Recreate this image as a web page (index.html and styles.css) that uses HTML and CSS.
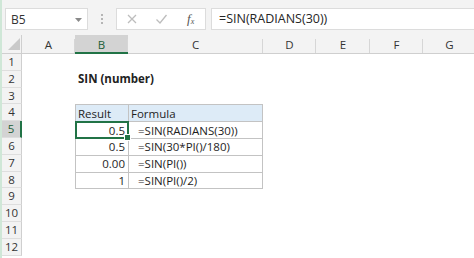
FILE: index.html
```html
<!DOCTYPE html>
<html>
<head>
<meta charset="utf-8">
<link rel="stylesheet" href="styles.css">
</head>
<body>
<div class="app">
  <div class="fbar">
    <div class="namebox"><span class="nb-text">B5</span><svg class="nb-arrow" width="7" height="4" viewBox="0 0 7 4"><path d="M0 0h7L3.5 4z" fill="#8a8a8a"/></svg></div>
    <div class="dots"><i></i><i></i><i></i></div>
    <div class="fx-group">
      <svg class="ic" width="12" height="12" viewBox="0 0 12 12"><path d="M2 2l8 8M10 2l-8 8" stroke="#bdbdbd" stroke-width="1.3" fill="none"/></svg>
      <svg class="ic" width="13" height="12" viewBox="0 0 13 12"><path d="M1.5 6.5l3.5 3.5L11.5 2" stroke="#bdbdbd" stroke-width="1.3" fill="none"/></svg>
      <span class="fx">f<sub>x</sub></span>
    </div>
    <div class="finput">=SIN(RADIANS(30))</div>
  </div>
  <div class="sheet">
    <div class="corner"><svg width="12" height="12" viewBox="0 0 12 12"><path d="M12 0V12H0z" fill="#c9c9c9"/></svg></div>
    <div class="ch">A</div>
    <div class="ch sel">B</div>
    <div class="ch">C</div>
    <div class="ch">D</div>
    <div class="ch">E</div>
    <div class="ch">F</div>
    <div class="ch">G</div>
    <div class="ch last"></div>

    <div class="rh r1">1</div>
    <div class="rh r2">2</div>
    <div class="rh r3">3</div>
    <div class="rh r4">4</div>
    <div class="rh r5 sel">5</div>
    <div class="rh r6">6</div>
    <div class="rh r7">7</div>
    <div class="rh r8">8</div>
    <div class="rh r9">9</div>
    <div class="rh r10">10</div>
    <div class="rh r11">11</div>
    <div class="rh r12">12</div>

    <div class="title">SIN (number)</div>

    <table class="tbl">
      <tr class="thead"><td>Result</td><td>Formula</td></tr>
      <tr><td class="num cur">0.5</td><td class="f">=SIN(RADIANS(30))</td></tr>
      <tr><td class="num">0.5</td><td class="f">=SIN(30*PI()/180)</td></tr>
      <tr><td class="num">0.00</td><td class="f">=SIN(PI())</td></tr>
      <tr><td class="num">1</td><td class="f">=SIN(PI()/2)</td></tr>
    </table>
  </div>
</div>
</body>
</html>
```
FILE: styles.css
```css
* { box-sizing: border-box; }
html, body { margin: 0; padding: 0; background: #fff; }
body { font-family: "Open Sans", "Liberation Sans", sans-serif; color: #262626; }

.app {
  width: 474px;
  height: 258px;
  overflow: hidden;
  border-left: 2px solid #cfe7d7;
  background: #fff;
}

.fbar {
  height: 35px;
  background: #f3f3f3;
  display: flex;
  align-items: flex-start;
  padding-top: 8px;
  padding-left: 3px;
}
.namebox {
  width: 83px;
  height: 22px;
  background: #fff;
  border: 1px solid #dcdcdc;
  display: flex;
  align-items: center;
  justify-content: space-between;
  padding: 0 5px 0 5px;
  font-size: 12px;
  color: #333;
}
.nb-arrow { margin-top: 1px; }
.dots {
  width: 28px;
  height: 22px;
  display: flex;
  flex-direction: column;
  align-items: center;
  justify-content: center;
  gap: 2px;
}
.dots i { display: block; width: 2px; height: 2px; background: #b5b5b5; }
.fx-group {
  width: 90px;
  height: 22px;
  background: #fff;
  border: 1px solid #dcdcdc;
  display: flex;
  align-items: center;
  padding-left: 9px;
  gap: 17px;
}
.fx {
  font-family: "Liberation Serif", serif;
  font-style: italic;
  font-size: 13px;
  color: #555;
  margin-left: 2px;
}
.fx sub { font-size: 8px; vertical-align: -1px; }
.finput {
  flex: 1;
  height: 22px;
  margin-left: 5px;
  background: #fff;
  border: 1px solid #dcdcdc;
  border-right: none;
  font-size: 12.5px;
  line-height: 20px;
  padding-left: 7px;
  color: #262626;
}

.sheet {
  display: grid;
  grid-template-columns: 20px 53px 53px 135px 53px 54px 53px 53px 1fr;
  grid-template-rows: 19px repeat(12, 16.8px);
  background: #fff;
}
.corner {
  background: #f3f3f3;
  border-bottom: 1px solid #cfcfcf;
  border-right: 1px solid #cfcfcf;
  display: flex;
  align-items: flex-end;
  justify-content: flex-end;
  padding: 0 1px 3px 0;
}
.ch {
  background: #f3f3f3;
  border-bottom: 1px solid #cfcfcf;
  font-size: 11.5px;
  color: #333;
  text-align: center;
  line-height: 19px;
  position: relative;
}
.ch::after {
  content: "";
  position: absolute;
  right: 0;
  top: 4px;
  bottom: 0;
  width: 1px;
  background: #d6d6d6;
}
.ch.sel {
  background: #d3d3d3;
  border-bottom: 2px solid #217346;
  color: #1e5e38;
}
.ch.last::after { display: none; }

.rh {
  grid-column: 1;
  background: #f3f3f3;
  border-right: 1px solid #cfcfcf;
  border-bottom: 1px solid #dedede;
  font-size: 11.5px;
  line-height: 16px;
  text-align: center;
  color: #333;
}
.rh.r1 { grid-row: 2; }
.rh.r2 { grid-row: 3; }
.rh.r3 { grid-row: 4; }
.rh.r4 { grid-row: 5; }
.rh.r5 { grid-row: 6; }
.rh.r6 { grid-row: 7; }
.rh.r7 { grid-row: 8; }
.rh.r8 { grid-row: 9; }
.rh.r9 { grid-row: 10; }
.rh.r10 { grid-row: 11; }
.rh.r11 { grid-row: 12; }
.rh.r12 { grid-row: 13; }
.rh.sel {
  background: #d3d3d3;
  border-right: 2px solid #217346;
  color: #1e5e38;
}

.title {
  grid-column: 3 / 5;
  grid-row: 3;
  font-size: 11.5px;
  font-weight: bold;
  line-height: 16px;
  padding-left: 3px;
  color: #222;
}

.tbl {
  grid-column: 3 / 5;
  grid-row: 5 / 10;
  border-collapse: collapse;
  width: 100%;
  height: 100%;
  font-size: 11.5px;
  color: #1e1e1e;
  table-layout: fixed;
}
.tbl td {
  border: 1px solid #c3c3c3;
  padding: 0 2px;
  height: 16.8px;
  line-height: 15px;
  white-space: nowrap;
  overflow: visible;
}
.tbl td:first-child { width: 53px; }
.tbl .thead td { background: #ddebf7; }
.tbl td.num { text-align: right; padding-right: 3px; }
.tbl td.f { padding-left: 9px; }
.tbl td.cur { position: relative; }
.tbl td.cur::after {
  content: "";
  position: absolute;
  left: -1px;
  top: -1px;
  right: -1px;
  bottom: -1px;
  border: 2px solid #217346;
}
.tbl td.cur::before {
  content: "";
  position: absolute;
  right: -3px;
  bottom: -3px;
  width: 5px;
  height: 5px;
  background: #217346;
  border: 1px solid #fff;
  z-index: 1;
}
```
